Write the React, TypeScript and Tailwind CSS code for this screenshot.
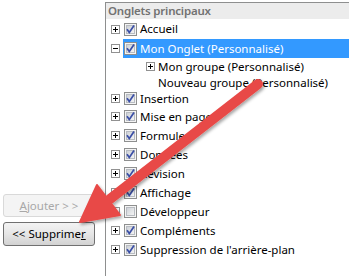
import React from 'react';

type Item = { label: string; checked: boolean; row: string; sub?: 'plus' | 'none'; selected?: boolean; minus?: boolean };

const items: Item[] = [
  { label: 'Accueil', checked: true, row: 'h-[20px]' },
  { label: 'Mon Onglet (Personnalisé)', checked: true, row: 'h-[19px]', selected: true, minus: true },
  { label: 'Mon groupe (Personnalisé)', checked: false, row: 'h-[17px]', sub: 'plus' },
  { label: 'Nouveau groupe (Personnalisé)', checked: false, row: 'h-[15px]', sub: 'none' },
  { label: 'Insertion', checked: true, row: 'h-[17px]' },
  { label: 'Mise en page', checked: true, row: 'h-[19px]' },
  { label: 'Formules', checked: true, row: 'h-[19px]' },
  { label: 'Données', checked: true, row: 'h-[19px]' },
  { label: 'Révision', checked: true, row: 'h-[19px]' },
  { label: 'Affichage', checked: true, row: 'h-[19px]' },
  { label: 'Développeur', checked: false, row: 'h-[19px]' },
  { label: 'Compléments', checked: true, row: 'h-[19px]' },
  { label: "Suppression de l'arrière-plan", checked: true, row: 'h-[19px]' },
];

const Expander: React.FC<{ minus?: boolean }> = ({ minus }) => (
  <svg width="9" height="9" viewBox="0 0 9 9" className="shrink-0">
    <rect x="0.5" y="0.5" width="8" height="8" fill="#fff" stroke="#919191" />
    <path d="M2 4.5h5" stroke="#000" />
    {!minus && <path d="M4.5 2v5" stroke="#000" />}
  </svg>
);

const Check: React.FC<{ checked: boolean }> = ({ checked }) => (
  <svg width="13" height="13" viewBox="0 0 13 13" className="shrink-0">
    <defs>
      <linearGradient id="cbg" x1="0" y1="0" x2="1" y2="1">
        <stop offset="0" stopColor="#cbcfd5" />
        <stop offset="1" stopColor="#f6f6f6" />
      </linearGradient>
    </defs>
    <rect x="0.5" y="0.5" width="12" height="12" fill="#f4f4f4" stroke="#8e8f8f" />
    <rect x="2.5" y="2.5" width="8" height="8" fill="url(#cbg)" stroke="#b8bcc2" />
    {checked && <path d="M3 6.2l2.3 3.3L10 2.6" fill="none" stroke="#3a4ea6" strokeWidth="1.7" />}
  </svg>
);

export default function App() {
  return (
    <div className="relative flex h-[276px] w-[349px] overflow-hidden bg-white text-[11.5px] text-black [font-family:'Noto_Sans',sans-serif]">
      <div className="flex w-[105px] shrink-0 flex-col gap-[5px] pl-[3px] pt-[194px]">
        <button className="h-[23px] w-[92px] rounded-[3px] border border-[#d9d9d9] bg-[#f4f4f4] text-[#a8a8a8]">
          <span className="underline">A</span>jouter &gt; &gt;
        </button>
        <button className="h-[24px] w-[92px] rounded-[3px] border border-[#707070] bg-gradient-to-b from-[#f3f3f3] via-[#e6e6e6] to-[#d2d2d2]">
          &lt;&lt; Supprime<span className="underline">r</span>
        </button>
      </div>
      <div className="mt-[2px] flex-1 border-l border-t border-[#8e8f8f]">
        <div className="flex h-[16px] items-center bg-[#ececec] pl-[2px] font-semibold leading-none tracking-[-0.2px] text-[#727272]">Onglets principaux</div>
        {items.map((it) => (
          <div key={it.label} className={`flex items-center ${it.row}`}>
            {it.sub ? (
              <div className="flex items-center pl-[40px]">
                {it.sub === 'plus' ? <Expander /> : <span className="w-[9px]" />}
                <span className="ml-[3px] whitespace-nowrap">{it.label}</span>
              </div>
            ) : (
              <div className="flex h-full items-center pl-[5px]">
                <Expander minus={it.minus} />
                <div className={`ml-[3px] flex h-full items-center pl-px ${it.selected ? 'w-[240px] bg-[#3399ff] text-white' : ''}`}>
                  <Check checked={it.checked} />
                  <span className="ml-[3px] whitespace-nowrap">{it.label}</span>
                </div>
              </div>
            )}
          </div>
        ))}
      </div>
      <svg className="pointer-events-none absolute inset-0" width="349" height="276" viewBox="0 0 349 276">
        <defs>
          <filter id="sh" x="-20%" y="-20%" width="140%" height="140%">
            <feDropShadow dx="1.5" dy="2" stdDeviation="1.5" floodColor="#000" floodOpacity="0.35" />
          </filter>
        </defs>
        <g filter="url(#sh)" fill="#e84a47" stroke="#e84a47">
          <line x1="258" y1="84" x2="110" y2="199" strokeWidth="10" strokeLinecap="round" />
          <polygon points="80,222 97,185 120,215" strokeWidth="2" strokeLinejoin="round" />
        </g>
      </svg>
    </div>
  );
}
